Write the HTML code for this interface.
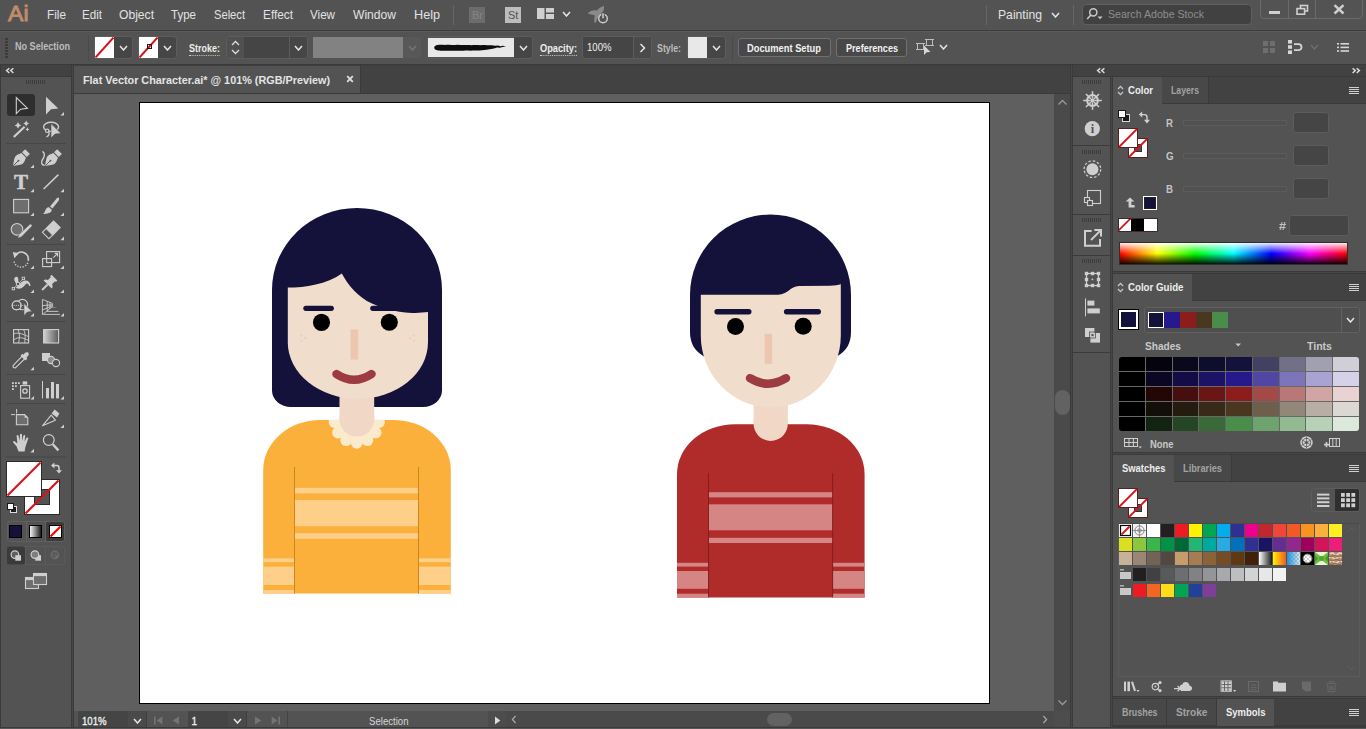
<!DOCTYPE html>
<html lang="en"><head><meta charset="utf-8"><title>Adobe Illustrator - Flat Vector Character.ai</title>
<style>
*{box-sizing:border-box;margin:0;padding:0}
html,body{width:1366px;height:729px;overflow:hidden;background:#535353;font-family:"Liberation Sans",sans-serif}
body{position:relative}
.a{position:absolute;display:block}
.t{position:absolute;display:block;white-space:pre;transform-origin:0 50%}

</style></head>
<body>
<div class="a" style="left:74px;top:65px;width:996px;height:28px;background:#424242;"></div>
<div class="a" style="left:74px;top:65px;width:286px;height:28px;background:#535353;"></div>
<div class="a" style="left:74px;top:65px;width:996px;height:1px;background:#3f3f3f;"></div>
<div class="a" style="left:360px;top:65px;width:1px;height:28px;background:#3a3a3a;"></div>
<div class="a" style="left:74px;top:93px;width:996px;height:1px;background:#3a3a3a;"></div>
<span class="t" style="left:83px;top:74.69px;font-size:11px;line-height:11px;color:#e4e4e4;font-weight:700;transform:scaleX(0.9841);">Flat Vector Character.ai* @ 101% (RGB/Preview)</span>
<svg class="a" style="left:346px;top:75px;" width="8" height="8" viewBox="0 0 8 8"><path d="M1.2 1.2 L6.8 6.8 M6.8 1.2 L1.2 6.8" stroke="#e0e0e0" stroke-width="1.8"/></svg>
<div class="a" style="left:74px;top:94px;width:980px;height:617px;background:#5f5f5f;"></div>
<div class="a" style="left:139px;top:102px;width:851px;height:602px;background:#fff;border:1px solid #000;"></div>
<svg class="a" style="left:0;top:0" width="1366" height="729" viewBox="0 0 1366 729"><path d="M272 290 A85 82 0 0 1 442 290 L442 390.5 A19 16.5 0 0 1 423 407 L291 407 A19 16.5 0 0 1 272 390.5 Z" fill="#14113a"/><path d="M339.5 390 L374.2 390 L374.2 419.2 A17.35 17.35 0 0 1 339.5 419.2 Z" fill="#f0d7c6"/><path d="M287.8 270 L428 270 L428 342.3 A70.1 56.4 0 0 1 287.8 342.3 Z" fill="#f1ddcc"/><rect x="303.3" y="305.7" width="30.6" height="5.2" rx="2.6" fill="#14113a"/><rect x="370.2" y="305.7" width="30.6" height="5.2" rx="2.6" fill="#14113a"/><path d="M286 262 L430 262 L430 312 L428.3 312 C424 312.4 420 312.8 415 313 C403 313.5 385 309.5 372 303.6 C358 297 348 285 341.8 273.4 C327 284 305 287.6 287.8 287.6 L286 287.6 Z" fill="#14113a"/><circle cx="321.5" cy="322.4" r="8.55" fill="#000"/><circle cx="389.3" cy="322.3" r="8.55" fill="#000"/><rect x="350.6" y="329.4" width="7.6" height="30.1" fill="#ecc6ae"/><path d="M336.4 374 Q354 385.6 371.6 374" fill="none" stroke="#9c3b40" stroke-width="8.4" stroke-linecap="round"/><circle cx="301.4" cy="335.6" r="1.25" fill="#f3cdbd"/><circle cx="305.1" cy="338.1" r="1.25" fill="#f3cdbd"/><circle cx="301.4" cy="340.8" r="1.25" fill="#f3cdbd"/><circle cx="413.9" cy="335.6" r="1.25" fill="#f3cdbd"/><circle cx="410.1" cy="338.1" r="1.25" fill="#f3cdbd"/><circle cx="413.9" cy="340.8" r="1.25" fill="#f3cdbd"/><path d="M263.2 593.6 L263.2 470 A57 50 0 0 1 320.2 420 L393.8 420 A57 50 0 0 1 450.8 470 L450.8 593.6 Z" fill="#fbb03b"/><rect x="294.8" y="487.8" width="123.4" height="5.6" fill="#fdcf89"/><rect x="294.8" y="500" width="123.4" height="26.2" fill="#fdcf89"/><rect x="294.8" y="533.2" width="123.4" height="5.6" fill="#fdcf89"/><rect x="263.2" y="558.3" width="31" height="3.9" fill="#fdcf89"/><rect x="418.8" y="558.3" width="32" height="3.9" fill="#fdcf89"/><rect x="263.2" y="566.6" width="31" height="18.4" fill="#fdcf89"/><rect x="418.8" y="566.6" width="32" height="18.4" fill="#fdcf89"/><rect x="263.2" y="590" width="31" height="3.6" fill="#fdcf89"/><rect x="418.8" y="590" width="32" height="3.6" fill="#fdcf89"/><rect x="294" y="467" width="0.8" height="126.6" fill="#c17c18"/><rect x="418.1" y="467" width="0.8" height="126.6" fill="#c17c18"/><clipPath id="ccl"><rect x="320" y="419.8" width="80" height="40"/></clipPath><g clip-path="url(#ccl)"><circle cx="356.8" cy="420.6" r="23.5" fill="#fceacd"/><circle cx="379.1" cy="422.2" r="5.8" fill="#fceacd"/><circle cx="375.7" cy="432.7" r="5.8" fill="#fceacd"/><circle cx="367.5" cy="440.3" r="5.8" fill="#fceacd"/><circle cx="356.8" cy="443.0" r="5.8" fill="#fceacd"/><circle cx="346.1" cy="440.3" r="5.8" fill="#fceacd"/><circle cx="337.9" cy="432.7" r="5.8" fill="#fceacd"/><circle cx="334.5" cy="422.2" r="5.8" fill="#fceacd"/></g><path d="M339.5 415 L374.2 415 L374.2 419.2 A17.35 17.35 0 0 1 339.5 419.2 Z" fill="#f0d7c6"/><path d="M690 295 A80.5 80.5 0 0 1 851 295 L851 332 C851 344 846 351 837 356.5 L704 356.5 C695 351 690 344 690 332 Z" fill="#14113a"/><path d="M753.6 395 L787.8 395 L787.8 423.8 A17.1 17.1 0 0 1 753.6 423.8 Z" fill="#f0d7c6"/><path d="M700.8 280 L840.8 280 L840.8 335.4 A70 72 0 0 1 700.8 335.4 Z" fill="#f1ddcc"/><path d="M698 265 L843 265 L840.8 284.3 Q837 285.6 830 285.8 L799 286 C790 286.2 788 294.7 778 294.7 L700.8 294.7 L698 294.7 Z" fill="#14113a"/><rect x="714.4" y="308.9" width="37.1" height="5.5" rx="2.7" fill="#14113a"/><rect x="783.9" y="308.9" width="37.1" height="5.5" rx="2.7" fill="#14113a"/><circle cx="735.5" cy="326.5" r="8.5" fill="#000"/><circle cx="803.2" cy="326.3" r="8.5" fill="#000"/><rect x="764.7" y="333.7" width="7.4" height="30.1" fill="#ecc6ae"/><path d="M750 378.2 Q768 389.2 786 378.2" fill="none" stroke="#9c3b40" stroke-width="8.4" stroke-linecap="round"/><path d="M677 597.4 L677 474.2 A58 50 0 0 1 735 424.2 L806.6 424.2 A58 50 0 0 1 864.6 474.2 L864.6 597.4 Z" fill="#b02c2b"/><rect x="708.8" y="492.2" width="123.6" height="5.2" fill="#d58584"/><rect x="708.8" y="504.3" width="123.6" height="26.0" fill="#d58584"/><rect x="708.8" y="537.8" width="123.6" height="5.2" fill="#d58584"/><rect x="677" y="562.8" width="31.2" height="3.8" fill="#d58584"/><rect x="833" y="562.8" width="31.6" height="3.8" fill="#d58584"/><rect x="677" y="571" width="31.2" height="17.8" fill="#d58584"/><rect x="833" y="571" width="31.6" height="17.8" fill="#d58584"/><rect x="677" y="593.7" width="31.2" height="3.7" fill="#d58584"/><rect x="833" y="593.7" width="31.6" height="3.7" fill="#d58584"/><rect x="708" y="473.2" width="0.8" height="124.2" fill="#7a1a1a"/><rect x="832.3" y="473.2" width="0.8" height="124.2" fill="#7a1a1a"/><path d="M753.6 420 L787.8 420 L787.8 423.8 A17.1 17.1 0 0 1 753.6 423.8 Z" fill="#f0d7c6"/></svg>
<div class="a" style="left:1054px;top:94px;width:16px;height:617px;background:#4a4a4a;"></div>
<svg class="a" style="left:1057px;top:99px;" width="11" height="7" viewBox="0 0 11 7"><path d="M1.5 5.5 L5.5 1.5 L9.5 5.5" fill="none" stroke="#9a9a9a" stroke-width="1.3"/></svg>
<svg class="a" style="left:1057px;top:699px;" width="11" height="7" viewBox="0 0 11 7"><path d="M1.5 1.5 L5.5 5.5 L9.5 1.5" fill="none" stroke="#9a9a9a" stroke-width="1.3"/></svg>
<div class="a" style="left:1055px;top:390px;width:15px;height:25px;background:#626262;border-radius:7.5px;"></div>
<div class="a" style="left:1070px;top:65px;width:3px;height:664px;background:#3a3a3a;"></div>
<div class="a" style="left:1071px;top:65px;width:1px;height:664px;background:#474747;"></div>
<div class="a" style="left:0px;top:0px;width:1366px;height:30px;background:#535353;"></div>
<div class="a" style="left:0px;top:30px;width:1366px;height:1px;background:#3d3d3d;"></div>
<span class="t" style="left:8px;top:2.98px;font-size:22px;line-height:22px;color:#c08c6c;transform:scaleX(1.0479);-webkit-text-stroke:0.9px #c08c6c;">Ai</span>
<span class="t" style="left:47px;top:8.00px;font-size:13px;line-height:13px;color:#e2e2e2;transform:scaleX(0.9068);">File</span>
<span class="t" style="left:82px;top:8.00px;font-size:13px;line-height:13px;color:#e2e2e2;transform:scaleX(0.8926);">Edit</span>
<span class="t" style="left:119px;top:8.00px;font-size:13px;line-height:13px;color:#e2e2e2;transform:scaleX(0.9314);">Object</span>
<span class="t" style="left:171px;top:8.00px;font-size:13px;line-height:13px;color:#e2e2e2;transform:scaleX(0.8869);">Type</span>
<span class="t" style="left:214px;top:8.00px;font-size:13px;line-height:13px;color:#e2e2e2;transform:scaleX(0.8578);">Select</span>
<span class="t" style="left:263px;top:8.00px;font-size:13px;line-height:13px;color:#e2e2e2;transform:scaleX(0.9087);">Effect</span>
<span class="t" style="left:310px;top:8.00px;font-size:13px;line-height:13px;color:#e2e2e2;transform:scaleX(0.8944);">View</span>
<span class="t" style="left:353px;top:8.00px;font-size:13px;line-height:13px;color:#e2e2e2;transform:scaleX(0.9297);">Window</span>
<span class="t" style="left:414px;top:8.00px;font-size:13px;line-height:13px;color:#e2e2e2;transform:scaleX(0.9720);">Help</span>
<div class="a" style="left:453px;top:5px;width:1px;height:20px;background:#666;"></div>
<div class="a" style="left:469px;top:7px;width:16px;height:16px;background:#6c6c6c;"></div>
<span class="t" style="left:471.5px;top:10.11px;font-size:10.5px;line-height:10.5px;color:#858585;transform:scaleX(1.0476);">Br</span>
<div class="a" style="left:505px;top:7px;width:16px;height:16px;background:#bdbdbd;"></div>
<span class="t" style="left:508px;top:9.99px;font-size:11px;line-height:11px;color:#535353;">St</span>
<svg class="a" style="left:537px;top:8px;" width="17" height="11" viewBox="0 0 17 11"><rect x="0" y="0" width="7.5" height="11" fill="#cfcfcf"/><rect x="9" y="0" width="8" height="4.5" fill="#cfcfcf"/><rect x="9" y="6" width="8" height="5" fill="#cfcfcf"/></svg>
<svg class="a" style="left:562.0px;top:10.5px;" width="9" height="6" viewBox="0 0 9 6"><path d="M1 1 L4.5 5 L8 1" fill="none" stroke="#e6e6e6" stroke-width="1.5"/></svg>
<svg class="a" style="left:586px;top:5px;" width="24" height="20" viewBox="0 0 24 20"><path d="M1.5 8.5 C4 5.5 8 4.5 11 5.5 C13 3 15.5 1.5 18 1 C18.3 3.5 17.6 6 16 8.5 L12.5 12 C11.5 13 10.5 15.5 10 17.5 L8.3 17.5 C8.3 15 8.2 12.5 9 10.5 C6.5 9.5 4 9.3 1.5 8.5 Z" fill="#8a8a8a"/><circle cx="17" cy="13.5" r="4.3" fill="#535353" stroke="#cfcfcf" stroke-width="1.4"/><rect x="15.3" y="7.6" width="3.4" height="4" fill="#535353"/><line x1="17" y1="8.3" x2="17" y2="13.2" stroke="#cfcfcf" stroke-width="1.5"/></svg>
<div class="a" style="left:986px;top:5px;width:1px;height:20px;background:#666;"></div>
<span class="t" style="left:998px;top:8.00px;font-size:13px;line-height:13px;color:#e2e2e2;transform:scaleX(0.9365);">Painting</span>
<svg class="a" style="left:1051.0px;top:12.0px;" width="9" height="6" viewBox="0 0 9 6"><path d="M1 1 L4.5 5 L8 1" fill="none" stroke="#e6e6e6" stroke-width="1.5"/></svg>
<div class="a" style="left:1073px;top:5px;width:1px;height:20px;background:#666;"></div>
<div class="a" style="left:1082px;top:4px;width:170px;height:21px;background:#414141;border:1px solid #5f5f5f;border-radius:4px;"></div>
<svg class="a" style="left:1086px;top:7px;" width="18" height="14" viewBox="0 0 18 14"><circle cx="7.3" cy="5.3" r="3.6" fill="none" stroke="#c8c8c8" stroke-width="1.5"/><line x1="4.8" y1="8" x2="1.2" y2="12" stroke="#c8c8c8" stroke-width="1.6"/><path d="M11.6 9.5 L16.6 9.5 L14.1 12.2 Z" fill="#c8c8c8"/></svg>
<span class="t" style="left:1108px;top:9.27px;font-size:11.5px;line-height:11.5px;color:#8e8e8e;transform:scaleX(0.9211);">Search Adobe Stock</span>
<div class="a" style="left:1260px;top:-2px;width:103px;height:21px;border:1px solid #6a6a6a;border-radius:0 0 4px 4px;"></div>
<div class="a" style="left:1288px;top:0px;width:1px;height:18px;background:#6a6a6a;"></div>
<div class="a" style="left:1315px;top:0px;width:1px;height:18px;background:#6a6a6a;"></div>
<div class="a" style="left:1269px;top:11px;width:11px;height:3px;background:#cfcfcf;"></div>
<svg class="a" style="left:1296px;top:4px;" width="14" height="12" viewBox="0 0 14 12"><rect x="4.5" y="1.5" width="7" height="5.5" fill="none" stroke="#cfcfcf" stroke-width="1.6"/><rect x="1" y="4.6" width="7.6" height="5.6" fill="#535353" stroke="#cfcfcf" stroke-width="1.6"/></svg>
<svg class="a" style="left:1333px;top:4px;" width="12" height="11" viewBox="0 0 12 11"><path d="M1.5 1.2 L10.5 9.5 M10.5 1.2 L1.5 9.5" stroke="#cfcfcf" stroke-width="2.4" fill="none"/></svg>
<div class="a" style="left:0px;top:31px;width:1366px;height:33px;background:#535353;"></div>
<div class="a" style="left:0px;top:31px;width:1366px;height:1px;background:#5a5a5a;"></div>
<div class="a" style="left:5px;top:38px;width:3px;height:1.5px;background:#3a3a3a;"></div>
<div class="a" style="left:5px;top:41px;width:3px;height:1.5px;background:#3a3a3a;"></div>
<div class="a" style="left:5px;top:44px;width:3px;height:1.5px;background:#3a3a3a;"></div>
<div class="a" style="left:5px;top:47px;width:3px;height:1.5px;background:#3a3a3a;"></div>
<div class="a" style="left:5px;top:50px;width:3px;height:1.5px;background:#3a3a3a;"></div>
<div class="a" style="left:5px;top:53px;width:3px;height:1.5px;background:#3a3a3a;"></div>
<div class="a" style="left:5px;top:56px;width:3px;height:1.5px;background:#3a3a3a;"></div>
<span class="t" style="left:15px;top:42.14px;font-size:10px;line-height:10px;color:#bcbcbc;font-weight:700;transform:scaleX(0.9079);">No Selection</span>
<div class="a" style="left:88px;top:36px;width:1px;height:25px;background:#4a4a4a;"></div>
<div class="a" style="left:94px;top:36px;width:39px;height:23px;border:1px solid #5c5c5c;border-radius:3px;"></div>
<svg class="a" style="left:95px;top:37px;" width="19" height="21" viewBox="0 0 19 21"><rect x="0" y="0" width="19" height="21" fill="#fff"/><line x1="0.5" y1="20.5" x2="18.5" y2="0.5" stroke="#d4151b" stroke-width="2"/></svg>
<div class="a" style="left:114px;top:37px;width:18px;height:21px;background:#464646;border-radius:0 3px 3px 0;"></div>
<svg class="a" style="left:118.5px;top:44.5px;" width="9" height="6" viewBox="0 0 9 6"><path d="M1 1 L4.5 5 L8 1" fill="none" stroke="#e6e6e6" stroke-width="1.5"/></svg>
<div class="a" style="left:138px;top:36px;width:39px;height:23px;border:1px solid #5c5c5c;border-radius:3px;"></div>
<svg class="a" style="left:139px;top:37px;" width="19" height="21" viewBox="0 0 19 21"><rect x="0" y="0" width="19" height="21" fill="#fff"/><line x1="0.5" y1="20.5" x2="18.5" y2="0.5" stroke="#d4151b" stroke-width="2"/></svg>
<svg class="a" style="left:147px;top:44px;" width="5" height="5" viewBox="0 0 5 5"><rect x="0.5" y="0.5" width="4" height="4" fill="none" stroke="#1a1a1a" stroke-width="1"/></svg>
<div class="a" style="left:158px;top:37px;width:18px;height:21px;background:#464646;border-radius:0 3px 3px 0;"></div>
<svg class="a" style="left:162.5px;top:44.5px;" width="9" height="6" viewBox="0 0 9 6"><path d="M1 1 L4.5 5 L8 1" fill="none" stroke="#e6e6e6" stroke-width="1.5"/></svg>
<span class="t" style="left:189px;top:43.53px;font-size:10px;line-height:10px;color:#ececec;font-weight:700;transform:scaleX(0.8998);border-bottom:1px dotted #ccc;padding-bottom:1px;">Stroke:</span>
<div class="a" style="left:226px;top:36px;width:82px;height:23px;border:1px solid #5c5c5c;border-radius:3px;"></div>
<div class="a" style="left:227px;top:37px;width:17px;height:21px;background:#505050;"></div>
<svg class="a" style="left:231px;top:39px;" width="9" height="17" viewBox="0 0 9 17"><path d="M1 6 L4.5 2.5 L8 6" fill="none" stroke="#ddd" stroke-width="1.3"/><path d="M1 11 L4.5 14.5 L8 11" fill="none" stroke="#ddd" stroke-width="1.3"/></svg>
<div class="a" style="left:244px;top:37px;width:45px;height:21px;background:#454545;"></div>
<div class="a" style="left:289px;top:37px;width:1px;height:21px;background:#5c5c5c;"></div>
<div class="a" style="left:290px;top:37px;width:17px;height:21px;background:#464646;border-radius:0 3px 3px 0;"></div>
<svg class="a" style="left:294.0px;top:44.5px;" width="9" height="6" viewBox="0 0 9 6"><path d="M1 1 L4.5 5 L8 1" fill="none" stroke="#e6e6e6" stroke-width="1.5"/></svg>
<div class="a" style="left:313px;top:37px;width:90px;height:21px;background:#828282;"></div>
<div class="a" style="left:403px;top:37px;width:18px;height:21px;background:#585858;border-radius:0 3px 3px 0;"></div>
<svg class="a" style="left:407.5px;top:44.5px;" width="9" height="6" viewBox="0 0 9 6"><path d="M1 1 L4.5 5 L8 1" fill="none" stroke="#767676" stroke-width="1.5"/></svg>
<div class="a" style="left:427px;top:36px;width:106px;height:23px;border:1px solid #5c5c5c;border-radius:3px;"></div>
<div class="a" style="left:428px;top:38px;width:86px;height:19px;background:#e8e8e8;"></div>
<svg class="a" style="left:428px;top:37px;" width="86" height="21" viewBox="0 0 86 21"><path d="M6.2 10.6 C6.4 8.6 8.6 8 11 7.8 C14 7.4 16 8.2 19 7.8 C22 7.4 25 8.2 28 7.9 C31 7.6 34 8.4 37 8 C40 7.7 43 8.4 46 8 C49 7.8 52 8.4 55 8 C58 7.8 61 8.4 64 8.2 L67 8.8 L70 8.4 L72.5 9.2 L75 8.8 L78 9.6 L74.5 10 L72 10.8 L69 10.6 C67 11.4 65 11.8 63 12 C60 12.6 57 12.8 54 13.2 C51 13.6 48 13.2 45 13.6 C42 13.9 39 13.4 36 13.7 C33 14 30 13.5 27 13.7 C24 14 21 13.5 18 13.7 C15 13.9 12 13.6 10 13.4 C7.6 13.2 6.2 12.4 6.2 10.6 Z" fill="#0d0d0d"/></svg>
<div class="a" style="left:514px;top:37px;width:18px;height:21px;background:#464646;border-radius:0 3px 3px 0;"></div>
<svg class="a" style="left:518.5px;top:44.5px;" width="9" height="6" viewBox="0 0 9 6"><path d="M1 1 L4.5 5 L8 1" fill="none" stroke="#e6e6e6" stroke-width="1.5"/></svg>
<span class="t" style="left:540px;top:43.53px;font-size:10px;line-height:10px;color:#ececec;font-weight:700;transform:scaleX(0.9246);border-bottom:1px dotted #ccc;padding-bottom:1px;">Opacity:</span>
<div class="a" style="left:582px;top:36px;width:70px;height:23px;border:1px solid #5c5c5c;border-radius:3px;"></div>
<div class="a" style="left:583px;top:37px;width:50px;height:21px;background:#454545;border-radius:2px 0 0 2px;"></div>
<span class="t" style="left:587px;top:43.33px;font-size:10px;line-height:10px;color:#f0f0f0;transform:scaleX(0.9578);">100%</span>
<div class="a" style="left:633px;top:37px;width:1px;height:21px;background:#5c5c5c;"></div>
<div class="a" style="left:634px;top:37px;width:17px;height:21px;background:#4a4a4a;"></div>
<svg class="a" style="left:639px;top:43px;" width="7" height="10" viewBox="0 0 7 10"><path d="M1.5 1 L5.5 5 L1.5 9" fill="none" stroke="#e6e6e6" stroke-width="1.5"/></svg>
<span class="t" style="left:657px;top:43.53px;font-size:10px;line-height:10px;color:#bdbdbd;font-weight:700;transform:scaleX(0.8812);">Style:</span>
<div class="a" style="left:687px;top:36px;width:39px;height:23px;border:1px solid #5c5c5c;border-radius:3px;"></div>
<div class="a" style="left:688px;top:37px;width:19px;height:21px;background:#e8e8e8;"></div>
<div class="a" style="left:707px;top:37px;width:18px;height:21px;background:#464646;border-radius:0 3px 3px 0;"></div>
<svg class="a" style="left:711.5px;top:44.5px;" width="9" height="6" viewBox="0 0 9 6"><path d="M1 1 L4.5 5 L8 1" fill="none" stroke="#e6e6e6" stroke-width="1.5"/></svg>
<div class="a" style="left:732px;top:36px;width:1px;height:25px;background:#4a4a4a;"></div>
<div class="a" style="left:738px;top:38px;width:93px;height:19px;background:#484848;border:1px solid #707070;border-radius:3px;"></div>
<span class="t" style="left:747px;top:43.53px;font-size:10px;line-height:10px;color:#f2f2f2;font-weight:700;transform:scaleX(0.9314);">Document Setup</span>
<div class="a" style="left:836px;top:38px;width:71px;height:19px;background:#484848;border:1px solid #707070;border-radius:3px;"></div>
<span class="t" style="left:845.5px;top:43.53px;font-size:10px;line-height:10px;color:#f2f2f2;font-weight:700;transform:scaleX(0.9080);">Preferences</span>
<svg class="a" style="left:916px;top:38px;" width="18" height="18" viewBox="0 0 18 18"><rect x="1.5" y="5.5" width="6" height="6" fill="none" stroke="#bdbdbd" stroke-width="1"/><rect x="10.5" y="1.5" width="6" height="6" fill="none" stroke="#bdbdbd" stroke-width="1"/><path d="M0 5.5h2M7 5.5h2M0 11.5h2M7 11.5h2M9 1.5h2M16 1.5h2M9 7.5h2M16 7.5h2" stroke="#bdbdbd"/><path d="M8 7.5 L8 17 L10.7 14.3 L14.5 14 Z" fill="#d6d6d6"/></svg>
<svg class="a" style="left:939.0px;top:44.0px;" width="9" height="6" viewBox="0 0 9 6"><path d="M1 1 L4.5 5 L8 1" fill="none" stroke="#e6e6e6" stroke-width="1.5"/></svg>
<svg class="a" style="left:1263px;top:41px;" width="12" height="12" viewBox="0 0 12 12"><g fill="#6e6e6e"><rect x="0" y="0" width="5" height="5"/><rect x="7" y="0" width="5" height="5"/><rect x="0" y="7" width="5" height="5"/><rect x="7" y="7" width="5" height="5"/></g></svg>
<svg class="a" style="left:1288px;top:40px;" width="15" height="14" viewBox="0 0 15 14"><g fill="#d6d6d6"><rect x="0" y="0" width="4" height="3.6"/><rect x="0" y="5.2" width="4" height="3.6"/><rect x="0" y="10.4" width="4" height="3.6"/></g><path d="M6 4.2 H10.5 A3 3 0 0 1 10.5 10.2 H6" fill="none" stroke="#d6d6d6" stroke-width="1.8"/></svg>
<svg class="a" style="left:1309.5px;top:43.5px;" width="9" height="6" viewBox="0 0 9 6"><path d="M1 1 L4.5 5 L8 1" fill="none" stroke="#6e6e6e" stroke-width="1.5"/></svg>
<svg class="a" style="left:1337px;top:43px;" width="12" height="9" viewBox="0 0 12 9"><g fill="#d6d6d6"><rect x="0" y="0" width="2" height="1.6"/><rect x="3.5" y="0" width="8.5" height="1.6"/><rect x="0" y="3.6" width="2" height="1.6"/><rect x="3.5" y="3.6" width="8.5" height="1.6"/><rect x="0" y="7.2" width="2" height="1.6"/><rect x="3.5" y="7.2" width="8.5" height="1.6"/></g></svg>
<div class="a" style="left:0px;top:64px;width:1366px;height:1px;background:#3a3a3a;"></div>
<div class="a" style="left:0px;top:65px;width:74px;height:664px;background:#535353;"></div>
<div class="a" style="left:0px;top:65px;width:1px;height:664px;background:#3a3a3a;"></div>
<div class="a" style="left:71px;top:65px;width:3px;height:664px;background:#3a3a3a;"></div>
<div class="a" style="left:72px;top:65px;width:1px;height:664px;background:#474747;"></div>
<div class="a" style="left:1px;top:65px;width:70px;height:12px;background:#424242;"></div>
<div class="a" style="left:1px;top:76px;width:70px;height:1px;background:#3a3a3a;"></div>
<svg class="a" style="left:5px;top:67px;" width="10" height="8" viewBox="0 0 10 8"><path d="M4.3 1.2 L1.6 3.6 L4.3 6 M8.4 1.2 L5.7 3.6 L8.4 6" fill="none" stroke="#dcdcdc" stroke-width="1.5"/></svg>
<svg class="a" style="left:26px;top:80px;" width="20" height="4" viewBox="0 0 20 4"><rect x="0" y="0" width="1" height="4" fill="#3c3c3c"/><rect x="2" y="0" width="1" height="4" fill="#3c3c3c"/><rect x="4" y="0" width="1" height="4" fill="#3c3c3c"/><rect x="6" y="0" width="1" height="4" fill="#3c3c3c"/><rect x="8" y="0" width="1" height="4" fill="#3c3c3c"/><rect x="10" y="0" width="1" height="4" fill="#3c3c3c"/><rect x="12" y="0" width="1" height="4" fill="#3c3c3c"/><rect x="14" y="0" width="1" height="4" fill="#3c3c3c"/><rect x="16" y="0" width="1" height="4" fill="#3c3c3c"/><rect x="18" y="0" width="1" height="4" fill="#3c3c3c"/></svg>
<svg class="a" style="left:0;top:0" width="74" height="460" viewBox="0 0 74 460"><rect x="7" y="94" width="28" height="22" rx="3" fill="#2e2e2e"/><path d="M16.3 97.6 L16.3 113.6 L20.6 109.2 L27.4 108.4 Z" fill="none" stroke="#cfcfcf" stroke-width="1.1" stroke-linejoin="miter"/><path d="M46 96.8 L46 114.4 L51 109.3 L58.3 108.5 Z" fill="#cfcfcf"/><path d="M64 112.0 L64 115.6 L60.4 115.6 Z" fill="#cfcfcf"/><line x1="13.8" y1="137" x2="24.6" y2="126.8" stroke="#cfcfcf" stroke-width="2.2"/><path d="M18 122.0 L19.156 124.244 L21.4 125.4 L19.156 126.55600000000001 L18 128.8 L16.844 126.55600000000001 L14.6 125.4 L16.844 124.244 Z" fill="#cfcfcf"/><path d="M26.2 120.6 L27.186 122.514 L29.099999999999998 123.5 L27.186 124.486 L26.2 126.4 L25.214 124.486 L23.3 123.5 L25.214 122.514 Z" fill="#cfcfcf"/><path d="M27.4 127.30000000000001 L28.113999999999997 128.686 L29.5 129.4 L28.113999999999997 130.114 L27.4 131.5 L26.686 130.114 L25.299999999999997 129.4 L26.686 128.686 Z" fill="#cfcfcf"/><ellipse cx="51.1" cy="126.8" rx="7.5" ry="4.6" fill="none" stroke="#cfcfcf" stroke-width="1.4"/><circle cx="47.2" cy="130.8" r="1.7" fill="#535353" stroke="#cfcfcf" stroke-width="1.2"/><path d="M48.8 131.4 C49.6 134 48.6 136 46.4 136.8" fill="none" stroke="#cfcfcf" stroke-width="1.3"/><path d="M51 123.6 L51 138 L55 134 L61 133.4 Z" fill="#cfcfcf" stroke="#535353" stroke-width="0.6"/><rect x="6" y="143" width="60" height="1" fill="#474747"/><rect x="6" y="244" width="60" height="1" fill="#474747"/><rect x="6" y="321" width="60" height="1" fill="#474747"/><rect x="6" y="374" width="60" height="1" fill="#474747"/><rect x="6" y="403" width="60" height="1" fill="#474747"/><rect x="6" y="456.5" width="60" height="1" fill="#474747"/><g transform="translate(19.9 159.2) rotate(45) scale(1.0)"><rect x="-3.3" y="-10.8" width="6.6" height="4.4" fill="#cfcfcf"/><path d="M-3.3 -5.4 L3.3 -5.4 C4 -3 5.2 -1.6 5.2 0.6 C5.2 3.4 2 6.4 0 10 C-2 6.4 -5.2 3.4 -5.2 0.6 C-5.2 -1.6 -4 -3 -3.3 -5.4 Z" fill="#cfcfcf"/><line x1="0" y1="9.6" x2="0" y2="2.6" stroke="#535353" stroke-width="0.9"/><circle cx="0" cy="2" r="0.9" fill="#535353"/></g><path d="M34 164.4 L34 168 L30.4 168 Z" fill="#cfcfcf"/><g transform="translate(51.9 159.2) rotate(45) scale(1.0)"><rect x="-3.3" y="-10.8" width="6.6" height="4.4" fill="#cfcfcf"/><path d="M-3.3 -5.4 L3.3 -5.4 C4 -3 5.2 -1.6 5.2 0.6 C5.2 3.4 2 6.4 0 10 C-2 6.4 -5.2 3.4 -5.2 0.6 C-5.2 -1.6 -4 -3 -3.3 -5.4 Z" fill="#cfcfcf"/><line x1="0" y1="9.6" x2="0" y2="2.6" stroke="#535353" stroke-width="0.9"/><circle cx="0" cy="2" r="0.9" fill="#535353"/></g><path d="M42.4 151.4 C45.4 153 44.6 156.5 42.6 159.5 C40.6 162.5 41.5 165 44.8 165.4" fill="none" stroke="#cfcfcf" stroke-width="1.4"/><text x="21" y="188.9" text-anchor="middle" font-family="Liberation Serif, serif" font-weight="700" font-size="21" fill="#cfcfcf" stroke="#cfcfcf" stroke-width="0.5">T</text><path d="M34 188.70000000000002 L34 192.3 L30.4 192.3 Z" fill="#cfcfcf"/><line x1="43.6" y1="189" x2="58.4" y2="174.6" stroke="#cfcfcf" stroke-width="1.5"/><path d="M64 188.70000000000002 L64 192.3 L60.4 192.3 Z" fill="#cfcfcf"/><rect x="13.6" y="199.4" width="15" height="13.4" fill="#6e6e6e" stroke="#cfcfcf" stroke-width="1.1"/><path d="M34 212.4 L34 216 L30.4 216 Z" fill="#cfcfcf"/><path d="M58.6 197.6 C59.6 198.4 59.2 200 58 201.6 L52.4 208.6 L50 206.6 L55.8 199.4 C57 198 58 197.2 58.6 197.6 Z" fill="#cfcfcf"/><path d="M49.2 207.4 L51.6 209.6 C52 212 49.5 214.2 43 214 C45 212.6 45 210.6 46 209 C46.8 207.6 48.2 207.2 49.2 207.4 Z" fill="#cfcfcf"/><path d="M64 212.4 L64 216 L60.4 216 Z" fill="#cfcfcf"/><circle cx="17" cy="229.3" r="5.8" fill="#6e6e6e" stroke="#cfcfcf" stroke-width="1.1"/><path d="M30.4 223.8 L32.4 225.8 L21.4 237 L17.6 238.2 L18.8 234.6 Z" fill="#cfcfcf" stroke="#535353" stroke-width="0.6"/><path d="M34 236.6 L34 240.2 L30.4 240.2 Z" fill="#cfcfcf"/><g transform="translate(51.6 229.6) rotate(-45)"><rect x="-3" y="-5.2" width="11" height="10.4" fill="#cfcfcf"/><rect x="-8.4" y="-4.6" width="5.4" height="9.2" fill="none" stroke="#cfcfcf" stroke-width="1.1"/></g><path d="M64 236.6 L64 240.2 L60.4 240.2 Z" fill="#cfcfcf"/><path d="M15.6 255 A7 7 0 0 1 28.1 260.8" fill="none" stroke="#cfcfcf" stroke-width="1.7"/><path d="M12.8 252 L18.8 253.2 L14.4 258.2 Z" fill="#cfcfcf"/><path d="M14.1 261.6 A7.2 7.2 0 0 0 27.8 262.6" fill="none" stroke="#cfcfcf" stroke-width="1.5" stroke-dasharray="1.3 1.45"/><path d="M34 265.4 L34 269 L30.4 269 Z" fill="#cfcfcf"/><rect x="46.6" y="251.6" width="13" height="11" fill="none" stroke="#cfcfcf" stroke-width="1.1"/><rect x="42.6" y="258.6" width="9" height="8" fill="none" stroke="#cfcfcf" stroke-width="1.1"/><path d="M53.4 257.6 L57.4 253.6 M54.6 253.4 H57.6 V256.4" fill="none" stroke="#cfcfcf" stroke-width="1.1"/><path d="M64 265.4 L64 269 L60.4 269 Z" fill="#cfcfcf"/><path d="M14.2 280 C14 277.5 16 276.2 17.4 277 C18.8 278 18 280 18.6 282 C19.4 284 22.6 280.4 26 280.6 C29 280.8 30.6 283.6 30.4 286 L29 286 C28.8 284.4 28 283.4 26.8 283.6 C25 284 24 288.2 20 288.6 C17.6 288.8 15.6 288 15 286.4 C16.6 285 16 283 15.2 282 Z" fill="#cfcfcf"/><line x1="13.4" y1="288.8" x2="23.6" y2="278.6" stroke="#535353" stroke-width="1.8"/><line x1="13.4" y1="288.8" x2="23.6" y2="278.6" stroke="#cfcfcf" stroke-width="0.8"/><rect x="12.2" y="287.4" width="2.4" height="2.4" fill="#535353" stroke="#cfcfcf" stroke-width="0.9"/><rect x="22.2" y="277.2" width="2.4" height="2.4" fill="#535353" stroke="#cfcfcf" stroke-width="0.9"/><circle cx="18" cy="284" r="1.7" fill="#535353" stroke="#cfcfcf" stroke-width="0.9"/><path d="M34 289.4 L34 293 L30.4 293 Z" fill="#cfcfcf"/><g transform="translate(47.9 284.2) rotate(45)"><path d="M-4.1 -9.2 H4.1 V-7.2 H2.9 V-3 C4.8 -2.2 5.7 -1.2 5.7 0.4 H-5.7 C-5.7 -1.2 -4.8 -2.2 -2.9 -3 V-7.2 H-4.1 Z" fill="#cfcfcf"/><rect x="-0.95" y="0.4" width="1.9" height="7.8" fill="#cfcfcf"/></g><path d="M64 289.4 L64 293 L60.4 293 Z" fill="#cfcfcf"/><circle cx="16.6" cy="305.4" r="4.4" fill="none" stroke="#cfcfcf" stroke-width="1.1"/><circle cx="22.4" cy="304.6" r="5.2" fill="none" stroke="#cfcfcf" stroke-width="1.1"/><circle cx="16.6" cy="305.4" r="3.8" fill="#535353"/><path d="M19.2 301.5 A4.4 4.4 0 0 1 19.2 309.2" fill="none" stroke="#8a8a8a" stroke-width="0.9"/><circle cx="16.6" cy="305.4" r="4.4" fill="none" stroke="#cfcfcf" stroke-width="1.1"/><path d="M13.6 305.4 h12" stroke="#cfcfcf" stroke-width="1" stroke-dasharray="1 1.2"/><path d="M24 303.4 L24 315.4 L27.4 312 L32 311.6 Z" fill="#cfcfcf" stroke="#535353" stroke-width="0.5"/><path d="M34 313.0 L34 316.6 L30.4 316.6 Z" fill="#cfcfcf"/><path d="M42.4 299.4 L52.4 303.4 L52.4 306.6 L42.4 314.6 Z M47.2 301.4 V310.8 M42.4 305.6 L52.4 304.8 M50 302.4 V308.6 M42.4 310 L52.4 305.8" fill="none" stroke="#cfcfcf" stroke-width="0.9"/><path d="M52.4 306.6 L57 308 H52 Z" fill="#8a8a8a"/><path d="M47 311.4 H58.4 M43.4 314.4 H60" stroke="#cfcfcf" stroke-width="0.9"/><path d="M64 313.0 L64 316.6 L60.4 316.6 Z" fill="#cfcfcf"/><rect x="13.6" y="329.6" width="15" height="13.4" fill="none" stroke="#cfcfcf" stroke-width="1.1"/><path d="M18 329.6 C20 334 19.6 338 18.6 343 M23.6 329.6 C26 334 25 339 24.6 343 M13.6 334 C18 331.6 23.6 334.6 28.6 336.6 M13.6 340 C18 336.6 22 337 28.6 340.6" fill="none" stroke="#cfcfcf" stroke-width="0.9"/><defs><linearGradient id="tg" x1="0" x2="1" y1="0" y2="0"><stop offset="0" stop-color="#d2d2d2"/><stop offset="1" stop-color="#5a5a5a"/></linearGradient></defs><rect x="43.6" y="329.6" width="15" height="13.4" fill="url(#tg)" stroke="#cfcfcf" stroke-width="1.1"/><path d="M13.4 367.6 L13 365.6 L22 356.4 L24.6 359 L15.4 368 Z" fill="#535353" stroke="#cfcfcf" stroke-width="1.1"/><path d="M20.6 355.6 L22.4 353.8 L23.6 354.8 C24.4 352.6 26.6 351.4 28.2 352.6 C29.6 354 28.6 356.2 26.4 357.4 L27.4 358.6 L25.6 360.4 Z" fill="#cfcfcf"/><path d="M34 366.7 L34 370.3 L30.4 370.3 Z" fill="#cfcfcf"/><rect x="42" y="353" width="8" height="8" fill="#cfcfcf"/><circle cx="51" cy="360" r="3.6" fill="#8c8c8c" stroke="#cfcfcf" stroke-width="1.1"/><circle cx="56" cy="363" r="3.6" fill="#535353" stroke="#cfcfcf" stroke-width="1.1"/><rect x="12" y="382.2" width="1.8" height="1.8" fill="#cfcfcf"/><rect x="15" y="382.2" width="1.8" height="1.8" fill="#cfcfcf"/><rect x="18" y="382.2" width="1.8" height="1.8" fill="#cfcfcf"/><rect x="12" y="385.2" width="1.8" height="1.8" fill="#cfcfcf"/><rect x="15" y="385.2" width="1.8" height="1.8" fill="#cfcfcf"/><rect x="12" y="388.2" width="1.8" height="1.8" fill="#cfcfcf"/><rect x="20.6" y="385.6" width="9" height="12.6" fill="none" stroke="#cfcfcf" stroke-width="1.1"/><rect x="22.6" y="381.4" width="4.6" height="3.2" fill="#cfcfcf"/><circle cx="25" cy="391" r="2.2" fill="none" stroke="#cfcfcf" stroke-width="1.3"/><path d="M34 396.0 L34 399.6 L30.4 399.6 Z" fill="#cfcfcf"/><rect x="42" y="381" width="1" height="17.4" fill="#cfcfcf"/><rect x="46" y="388" width="3" height="10.4" fill="#cfcfcf"/><rect x="51" y="382" width="3" height="16.4" fill="#cfcfcf"/><rect x="56" y="384" width="3" height="14.4" fill="#cfcfcf"/><path d="M64 396.0 L64 399.6 L60.4 399.6 Z" fill="#cfcfcf"/><path d="M16.6 409 V413.4 M11 414.6 H15" stroke="#cfcfcf" stroke-width="1"/><path d="M16.4 414.6 H24.6 L27.8 417.8 V424.8 H16.4 Z" fill="#6e6e6e" stroke="#cfcfcf" stroke-width="1.1"/><path d="M24.6 414.6 V417.8 H27.8 Z" fill="#cfcfcf"/><path d="M42.4 425.8 L51.2 415.2 L55.4 420.2 Z" fill="#535353" stroke="#cfcfcf" stroke-width="1.1" stroke-linejoin="round"/><path d="M51.6 413.4 L54.6 409.6 L59.4 413.6 L57 417.6 Z" fill="#cfcfcf"/><path d="M64 424.4 L64 428 L60.4 428 Z" fill="#cfcfcf"/><path d="M16.6 446.6 L13.2 442.6 C12.6 441.6 13.8 440.6 14.8 441.4 L17.4 443.6 L16.6 436 C16.6 434.8 18.4 434.8 18.6 436 L19.6 441 L20 434.6 C20.2 433.4 22 433.4 22 434.6 L22.2 441 L23.4 435.6 C23.8 434.4 25.4 434.8 25.2 436 L24.6 441.6 L26.4 438 C27 437 28.6 437.6 28.2 438.8 L25.4 447 L24.6 451.4 H18.6 Z" fill="#cfcfcf"/><path d="M34 448.79999999999995 L34 452.4 L30.4 452.4 Z" fill="#cfcfcf"/><circle cx="48.8" cy="440" r="5.4" fill="none" stroke="#cfcfcf" stroke-width="1.2"/><line x1="52.8" y1="444.2" x2="58.4" y2="450.4" stroke="#cfcfcf" stroke-width="2.4"/></svg>
<svg class="a" style="left:0;top:460px" width="74" height="140" viewBox="0 460 74 140"><rect x="24.5" y="479.5" width="35" height="35" fill="#fff" stroke="#2b2b2b" stroke-width="1"/><rect x="34.5" y="489.5" width="15" height="15" fill="#535353" stroke="#2b2b2b" stroke-width="1"/><line x1="25.5" y1="513.5" x2="58.5" y2="480.5" stroke="#d4151b" stroke-width="2.2"/><rect x="6.5" y="461.5" width="35" height="35" fill="#fff" stroke="#2b2b2b" stroke-width="1"/><line x1="7.5" y1="495.5" x2="40.5" y2="462.5" stroke="#d4151b" stroke-width="2.2"/><path d="M53.6 465.6 H57 C58.6 465.6 59 466.6 59 468 V471" fill="none" stroke="#cfcfcf" stroke-width="1.5"/><path d="M51 465.6 L54.4 462.6 V468.6 Z M59 473.6 L56 470.2 H62 Z" fill="#cfcfcf"/><rect x="10.5" y="506.5" width="6" height="6" fill="#1a1a1a" stroke="#ddd" stroke-width="1"/><rect x="7.5" y="503.5" width="6" height="6" fill="#fff" stroke="#1a1a1a" stroke-width="1"/><rect x="7.5" y="521.5" width="57" height="20" rx="2" fill="none" stroke="#606060" stroke-width="1"/><rect x="46" y="522" width="18" height="19" rx="2" fill="#3c3c3c"/><line x1="26.5" y1="522" x2="26.5" y2="541" stroke="#606060"/><line x1="45.5" y1="522" x2="45.5" y2="541" stroke="#606060"/><rect x="9.5" y="525.5" width="12" height="12" fill="#14113a" stroke="#000" stroke-width="1"/><defs><linearGradient id="cg" x1="0" x2="1"><stop offset="0" stop-color="#fff"/><stop offset="1" stop-color="#111"/></linearGradient></defs><rect x="29.5" y="525.5" width="12" height="12" fill="url(#cg)" stroke="#000" stroke-width="1"/><rect x="49.5" y="525.5" width="12" height="12" fill="#fff" stroke="#000" stroke-width="1"/><line x1="50.5" y1="536.5" x2="60.5" y2="526.5" stroke="#f00" stroke-width="2.2"/><rect x="7.5" y="546.5" width="57" height="18" rx="2" fill="none" stroke="#5a5a5a" stroke-width="1"/><rect x="7" y="546.5" width="18" height="18" rx="2" fill="#3a3a3a"/><line x1="25.5" y1="547" x2="25.5" y2="564" stroke="#5a5a5a"/><line x1="45.5" y1="547" x2="45.5" y2="564" stroke="#5a5a5a"/><circle cx="14.9" cy="554.6" r="3.8" fill="#5e5e5e" stroke="#cfcfcf" stroke-width="1.2"/><rect x="15.3" y="555.2" width="5.7" height="5.5" fill="#cfcfcf"/><rect x="35.3" y="555.2" width="5.7" height="5.5" fill="#cfcfcf"/><circle cx="34.9" cy="554.6" r="3.8" fill="#7e7e7e" stroke="#cfcfcf" stroke-width="1.2"/><circle cx="54.9" cy="555" r="3.8" fill="#5c5c5c" stroke="#6e6e6e" stroke-width="1.2"/><path d="M55.4 555.4 h3 a3.4 3.4 0 0 1 -3 3 Z" fill="#6e6e6e"/><rect x="25.5" y="577.5" width="13" height="11" fill="#6e6e6e" stroke="#cfcfcf" stroke-width="1.1"/><rect x="25.5" y="577.5" width="13" height="2.6" fill="#cfcfcf"/><rect x="33.5" y="573.5" width="13" height="11" fill="#6e6e6e" stroke="#cfcfcf" stroke-width="1.1"/><rect x="33.5" y="573.5" width="13" height="2.6" fill="#cfcfcf"/></svg>
<div class="a" style="left:1073px;top:65px;width:293px;height:664px;background:#535353;"></div>
<div class="a" style="left:1073px;top:65px;width:293px;height:12px;background:#424242;"></div>
<div class="a" style="left:1073px;top:76px;width:293px;height:1px;background:#3a3a3a;"></div>
<div class="a" style="left:1110px;top:77px;width:3px;height:652px;background:#3a3a3a;"></div>
<div class="a" style="left:1111px;top:77px;width:1px;height:652px;background:#474747;"></div>
<svg class="a" style="left:1096px;top:67px;" width="10" height="8" viewBox="0 0 10 8"><path d="M4.3 1.2 L1.6 3.6 L4.3 6 M8.4 1.2 L5.7 3.6 L8.4 6" fill="none" stroke="#dcdcdc" stroke-width="1.5"/></svg>
<svg class="a" style="left:1351px;top:67px;" width="10" height="8" viewBox="0 0 10 8"><path d="M1.6 1.2 L4.3 3.6 L1.6 6 M5.7 1.2 L8.4 3.6 L5.7 6" fill="none" stroke="#dcdcdc" stroke-width="1.5"/></svg>
<svg class="a" style="left:1082px;top:80px;" width="20" height="4" viewBox="0 0 20 4"><rect x="0" y="0" width="1" height="4" fill="#3c3c3c"/><rect x="2" y="0" width="1" height="4" fill="#3c3c3c"/><rect x="4" y="0" width="1" height="4" fill="#3c3c3c"/><rect x="6" y="0" width="1" height="4" fill="#3c3c3c"/><rect x="8" y="0" width="1" height="4" fill="#3c3c3c"/><rect x="10" y="0" width="1" height="4" fill="#3c3c3c"/><rect x="12" y="0" width="1" height="4" fill="#3c3c3c"/><rect x="14" y="0" width="1" height="4" fill="#3c3c3c"/><rect x="16" y="0" width="1" height="4" fill="#3c3c3c"/><rect x="18" y="0" width="1" height="4" fill="#3c3c3c"/></svg>
<svg class="a" style="left:1082px;top:149.5px;" width="20" height="4" viewBox="0 0 20 4"><rect x="0" y="0" width="1" height="4" fill="#3c3c3c"/><rect x="2" y="0" width="1" height="4" fill="#3c3c3c"/><rect x="4" y="0" width="1" height="4" fill="#3c3c3c"/><rect x="6" y="0" width="1" height="4" fill="#3c3c3c"/><rect x="8" y="0" width="1" height="4" fill="#3c3c3c"/><rect x="10" y="0" width="1" height="4" fill="#3c3c3c"/><rect x="12" y="0" width="1" height="4" fill="#3c3c3c"/><rect x="14" y="0" width="1" height="4" fill="#3c3c3c"/><rect x="16" y="0" width="1" height="4" fill="#3c3c3c"/><rect x="18" y="0" width="1" height="4" fill="#3c3c3c"/></svg>
<svg class="a" style="left:1082px;top:218px;" width="20" height="4" viewBox="0 0 20 4"><rect x="0" y="0" width="1" height="4" fill="#3c3c3c"/><rect x="2" y="0" width="1" height="4" fill="#3c3c3c"/><rect x="4" y="0" width="1" height="4" fill="#3c3c3c"/><rect x="6" y="0" width="1" height="4" fill="#3c3c3c"/><rect x="8" y="0" width="1" height="4" fill="#3c3c3c"/><rect x="10" y="0" width="1" height="4" fill="#3c3c3c"/><rect x="12" y="0" width="1" height="4" fill="#3c3c3c"/><rect x="14" y="0" width="1" height="4" fill="#3c3c3c"/><rect x="16" y="0" width="1" height="4" fill="#3c3c3c"/><rect x="18" y="0" width="1" height="4" fill="#3c3c3c"/></svg>
<svg class="a" style="left:1082px;top:259px;" width="20" height="4" viewBox="0 0 20 4"><rect x="0" y="0" width="1" height="4" fill="#3c3c3c"/><rect x="2" y="0" width="1" height="4" fill="#3c3c3c"/><rect x="4" y="0" width="1" height="4" fill="#3c3c3c"/><rect x="6" y="0" width="1" height="4" fill="#3c3c3c"/><rect x="8" y="0" width="1" height="4" fill="#3c3c3c"/><rect x="10" y="0" width="1" height="4" fill="#3c3c3c"/><rect x="12" y="0" width="1" height="4" fill="#3c3c3c"/><rect x="14" y="0" width="1" height="4" fill="#3c3c3c"/><rect x="16" y="0" width="1" height="4" fill="#3c3c3c"/><rect x="18" y="0" width="1" height="4" fill="#3c3c3c"/></svg>
<div class="a" style="left:1073px;top:145px;width:37px;height:1px;background:#3a3a3a;"></div>
<div class="a" style="left:1073px;top:214px;width:37px;height:1px;background:#3a3a3a;"></div>
<div class="a" style="left:1073px;top:255px;width:37px;height:1px;background:#3a3a3a;"></div>
<div class="a" style="left:1073px;top:352px;width:37px;height:1px;background:#3a3a3a;"></div>
<svg class="a" style="left:1073px;top:77px" width="37" height="280" viewBox="1073 77 37 280"><circle cx="1092.5" cy="100.5" r="5.4" fill="none" stroke="#cfcfcf" stroke-width="2"/><circle cx="1092.5" cy="100.5" r="1.9" fill="#cfcfcf"/><line x1="1094.50" y1="100.50" x2="1101.80" y2="100.50" stroke="#cfcfcf" stroke-width="1.5"/><line x1="1093.91" y1="101.91" x2="1099.08" y2="107.08" stroke="#cfcfcf" stroke-width="1.5"/><line x1="1092.50" y1="102.50" x2="1092.50" y2="109.80" stroke="#cfcfcf" stroke-width="1.5"/><line x1="1091.09" y1="101.91" x2="1085.92" y2="107.08" stroke="#cfcfcf" stroke-width="1.5"/><line x1="1090.50" y1="100.50" x2="1083.20" y2="100.50" stroke="#cfcfcf" stroke-width="1.5"/><line x1="1091.09" y1="99.09" x2="1085.92" y2="93.92" stroke="#cfcfcf" stroke-width="1.5"/><line x1="1092.50" y1="98.50" x2="1092.50" y2="91.20" stroke="#cfcfcf" stroke-width="1.5"/><line x1="1093.91" y1="99.09" x2="1099.08" y2="93.92" stroke="#cfcfcf" stroke-width="1.5"/><circle cx="1092.3" cy="128.7" r="7.6" fill="#cfcfcf"/><text x="1092.4" y="132.8" text-anchor="middle" font-family="Liberation Serif, serif" font-weight="700" font-size="12.5" fill="#535353">i</text><circle cx="1092.4" cy="169.2" r="6" fill="#cfcfcf"/><circle cx="1092.4" cy="169.2" r="8.3" fill="none" stroke="#cfcfcf" stroke-width="1.2" stroke-dasharray="2.6 1.75"/><rect x="1087.5" y="190.5" width="13" height="13" fill="none" stroke="#cfcfcf" stroke-width="1.1"/><rect x="1084.5" y="197.5" width="5" height="5" fill="#535353" stroke="#cfcfcf" stroke-width="1.1"/><rect x="1087.5" y="200.5" width="5" height="5" fill="#535353" stroke="#cfcfcf" stroke-width="1.1"/><path d="M1091.6 231 H1085 V245.8 H1100 V239" fill="none" stroke="#cfcfcf" stroke-width="2"/><path d="M1091 240 L1100 231" fill="none" stroke="#cfcfcf" stroke-width="1.8"/><path d="M1094.4 229 H1102 V236.6 H1100 V231 H1094.4 Z" fill="#cfcfcf"/><rect x="1086.5" y="273.5" width="12" height="12" fill="none" stroke="#cfcfcf" stroke-width="1.2"/><rect x="1084.8" y="271.8" width="3.4" height="3.4" fill="#cfcfcf"/><rect x="1096.8" y="271.8" width="3.4" height="3.4" fill="#cfcfcf"/><rect x="1084.8" y="283.8" width="3.4" height="3.4" fill="#cfcfcf"/><rect x="1096.8" y="283.8" width="3.4" height="3.4" fill="#cfcfcf"/><rect x="1090.8" y="271.8" width="3.4" height="3.4" fill="#cfcfcf"/><rect x="1090.8" y="283.8" width="3.4" height="3.4" fill="#cfcfcf"/><rect x="1084.8" y="277.8" width="3.4" height="3.4" fill="#cfcfcf"/><rect x="1096.8" y="277.8" width="3.4" height="3.4" fill="#cfcfcf"/><rect x="1091.6" y="278.6" width="1.6" height="1.6" fill="#cfcfcf"/><rect x="1085" y="298.4" width="1" height="18" fill="#cfcfcf"/><rect x="1087.4" y="300.6" width="7" height="5" fill="#cfcfcf"/><rect x="1087.4" y="308.4" width="12.4" height="5" fill="#cfcfcf"/><rect x="1085" y="328" width="9.4" height="9" fill="#cfcfcf"/><rect x="1090.4" y="333" width="9.6" height="9.6" fill="#cfcfcf"/><rect x="1090.9" y="333.5" width="3.2" height="3.2" fill="#535353" stroke="#cfcfcf" stroke-width="1"/><rect x="1089.4" y="332" width="6" height="6" fill="none" stroke="#535353" stroke-width="0.8"/></svg>
<div class="a" style="left:1113px;top:77px;width:253px;height:27px;background:#424242;"></div>
<div class="a" style="left:1113px;top:77px;width:49px;height:27px;background:#535353;"></div>
<span class="t" style="left:1128px;top:85.94px;font-size:10px;line-height:10px;color:#ededed;font-weight:700;transform:scaleX(0.9575);">Color</span>
<div class="a" style="left:1162px;top:77px;width:46px;height:26px;background:#484848;"></div>
<div class="a" style="left:1208px;top:77px;width:1px;height:26px;background:#3a3a3a;"></div>
<span class="t" style="left:1171px;top:85.94px;font-size:10px;line-height:10px;color:#a2a2a2;font-weight:700;transform:scaleX(0.8682);">Layers</span>
<div class="a" style="left:1113px;top:103px;width:253px;height:1px;background:#3a3a3a;"></div>
<div class="a" style="left:1113px;top:103px;width:49px;height:1px;background:#535353;"></div>
<svg class="a" style="left:1349px;top:87px;" width="10" height="8" viewBox="0 0 10 8"><rect x="0" y="0" width="10" height="1" fill="#d0d0d0"/><rect x="0" y="2" width="10" height="1" fill="#d0d0d0"/><rect x="0" y="4" width="10" height="1" fill="#d0d0d0"/><rect x="0" y="6" width="10" height="1" fill="#d0d0d0"/></svg>
<svg class="a" style="left:1117px;top:85px;" width="7" height="11" viewBox="0 0 7 11"><path d="M1 4 L3.5 1.4 L6 4 M1 7 L3.5 9.6 L6 7" fill="none" stroke="#c8c8c8" stroke-width="1.3"/></svg>
<svg class="a" style="left:1118px;top:110px;" width="13" height="13" viewBox="0 0 13 13"><rect x="4.5" y="4.5" width="7" height="7" fill="#1a1a1a" stroke="#d8d8d8" stroke-width="1"/><rect x="0.5" y="0.5" width="7" height="7" fill="#fff" stroke="#1a1a1a" stroke-width="1"/></svg>
<svg class="a" style="left:1138px;top:111px;" width="13" height="13" viewBox="0 0 13 13"><path d="M3.6 3.6 H6.6 C8.6 3.6 9 4.8 9 6.2 V9.4" fill="none" stroke="#cfcfcf" stroke-width="1.4"/><path d="M0.8 3.6 L4.2 0.6 V6.6 Z M9 12.4 L6 8.8 H12 Z" fill="#cfcfcf"/></svg>
<svg class="a" style="left:1118px;top:128px;" width="30" height="30" viewBox="0 0 30 30"><rect x="10.5" y="10.5" width="19" height="19" fill="#fff" stroke="#521212" stroke-width="0.9"/><rect x="16.5" y="16.5" width="7" height="7" fill="#535353" stroke="#333" stroke-width="1"/><line x1="11" y1="29" x2="29" y2="11" stroke="#d4151b" stroke-width="1.8"/><rect x="0.5" y="0.5" width="19" height="19" fill="#fff" stroke="#521212" stroke-width="0.9"/><line x1="1" y1="19" x2="19" y2="1" stroke="#d4151b" stroke-width="1.8"/></svg>
<span class="t" style="left:1166px;top:119.13px;font-size:10px;line-height:10px;color:#c4c4c4;font-weight:700;transform:scaleX(0.9676);">R</span>
<div class="a" style="left:1183px;top:120px;width:104px;height:6px;background:#515151;border:1px solid #5c5c5c;border-radius:1px;"></div>
<div class="a" style="left:1293px;top:112px;width:36px;height:21px;background:#454545;border:1px solid #5c5c5c;border-radius:3px;"></div>
<span class="t" style="left:1166px;top:152.13px;font-size:10px;line-height:10px;color:#c4c4c4;font-weight:700;transform:scaleX(0.9767);">G</span>
<div class="a" style="left:1183px;top:153px;width:104px;height:6px;background:#515151;border:1px solid #5c5c5c;border-radius:1px;"></div>
<div class="a" style="left:1293px;top:145px;width:36px;height:21px;background:#454545;border:1px solid #5c5c5c;border-radius:3px;"></div>
<span class="t" style="left:1166px;top:185.13px;font-size:10px;line-height:10px;color:#c4c4c4;font-weight:700;transform:scaleX(0.9676);">B</span>
<div class="a" style="left:1183px;top:186px;width:104px;height:6px;background:#515151;border:1px solid #5c5c5c;border-radius:1px;"></div>
<div class="a" style="left:1293px;top:178px;width:36px;height:21px;background:#454545;border:1px solid #5c5c5c;border-radius:3px;"></div>
<svg class="a" style="left:1124.5px;top:197px;" width="10" height="11" viewBox="0 0 10 11"><path d="M0.6 4.6 L5 0.4 L9.4 4.6 H6.4 V8 H9.6 V10.4 H3.6 V4.6 Z" fill="#cfcfcf"/></svg>
<div class="a" style="left:1143px;top:196px;width:14px;height:14px;background:#14113a;border:1px solid #fff;outline:1px solid #222;outline-offset:-2px;"></div>
<svg class="a" style="left:1118px;top:218px;" width="13" height="13" viewBox="0 0 13 13"><rect x="0" y="0" width="13" height="13" fill="#fff"/><line x1="0.5" y1="12.5" x2="12.5" y2="0.5" stroke="#d4151b" stroke-width="1.8"/></svg>
<div class="a" style="left:1131px;top:218px;width:13px;height:13px;background:#000;"></div>
<div class="a" style="left:1144px;top:218px;width:13px;height:13px;background:#fff;"></div>
<div class="a" style="left:1117.5px;top:217.5px;width:40px;height:14px;border:1px solid #3a2a2a;"></div>
<span class="t" style="left:1279px;top:221.53px;font-size:10px;line-height:10px;color:#c4c4c4;font-weight:700;transform:scaleX(1.2584);">#</span>
<div class="a" style="left:1289px;top:215px;width:60px;height:21px;background:#454545;border:1px solid #5c5c5c;border-radius:3px;"></div>
<svg class="a" style="left:1119px;top:242px;" width="229" height="23" viewBox="0 0 229 23"><defs><linearGradient id="hue" x1="0" x2="1" y1="0" y2="0"><stop offset="0" stop-color="#f00"/><stop offset="0.1667" stop-color="#ff0"/><stop offset="0.3333" stop-color="#0f0"/><stop offset="0.5" stop-color="#0ff"/><stop offset="0.6667" stop-color="#00f"/><stop offset="0.8333" stop-color="#f0f"/><stop offset="1" stop-color="#f00"/></linearGradient><linearGradient id="wb" x1="0" x2="0" y1="0" y2="1"><stop offset="0" stop-color="#fff" stop-opacity="1"/><stop offset="0.5" stop-color="#fff" stop-opacity="0"/><stop offset="0.5" stop-color="#000" stop-opacity="0"/><stop offset="1" stop-color="#000" stop-opacity="1"/></linearGradient></defs><rect x="0" y="0" width="229" height="23" fill="url(#hue)"/><rect x="0" y="0" width="229" height="23" fill="url(#wb)"/><rect x="0.5" y="0.5" width="228" height="22" fill="none" stroke="#2e2e2e"/></svg>
<div class="a" style="left:1113px;top:271px;width:253px;height:3px;background:#3a3a3a;"></div>
<div class="a" style="left:1113px;top:272px;width:253px;height:1px;background:#474747;"></div>
<div class="a" style="left:1113px;top:274px;width:253px;height:27px;background:#424242;"></div>
<div class="a" style="left:1113px;top:274px;width:79px;height:27px;background:#535353;"></div>
<span class="t" style="left:1128px;top:282.94px;font-size:10px;line-height:10px;color:#ededed;font-weight:700;transform:scaleX(0.9697);">Color Guide</span>
<div class="a" style="left:1113px;top:300px;width:253px;height:1px;background:#3a3a3a;"></div>
<div class="a" style="left:1113px;top:300px;width:79px;height:1px;background:#535353;"></div>
<svg class="a" style="left:1349px;top:284px;" width="10" height="8" viewBox="0 0 10 8"><rect x="0" y="0" width="10" height="1" fill="#d0d0d0"/><rect x="0" y="2" width="10" height="1" fill="#d0d0d0"/><rect x="0" y="4" width="10" height="1" fill="#d0d0d0"/><rect x="0" y="6" width="10" height="1" fill="#d0d0d0"/></svg>
<svg class="a" style="left:1117px;top:282px;" width="7" height="11" viewBox="0 0 7 11"><path d="M1 4 L3.5 1.4 L6 4 M1 7 L3.5 9.6 L6 7" fill="none" stroke="#c8c8c8" stroke-width="1.3"/></svg>
<div class="a" style="left:1118px;top:309px;width:21px;height:21px;background:#14113a;border:1px solid #000;"></div>
<div class="a" style="left:1119px;top:310px;width:19px;height:19px;border:2px solid #fff;"></div>
<div class="a" style="left:1144px;top:307px;width:216px;height:26px;background:#4f4f4f;border:1px solid #616161;border-radius:3px;"></div>
<div class="a" style="left:1341px;top:308px;width:1px;height:24px;background:#616161;"></div>
<svg class="a" style="left:1345.5px;top:316.5px;" width="9" height="6" viewBox="0 0 9 6"><path d="M1 1 L4.5 5 L8 1" fill="none" stroke="#e6e6e6" stroke-width="1.5"/></svg>
<div class="a" style="left:1148px;top:312px;width:16px;height:16px;background:#14113a;"></div>
<div class="a" style="left:1164px;top:312px;width:16px;height:16px;background:#26198c;"></div>
<div class="a" style="left:1180px;top:312px;width:16px;height:16px;background:#8c1d1c;"></div>
<div class="a" style="left:1196px;top:312px;width:16px;height:16px;background:#4a3720;"></div>
<div class="a" style="left:1212px;top:312px;width:16px;height:16px;background:#4a8c49;"></div>
<div class="a" style="left:1148px;top:312px;width:16px;height:16px;border:1px solid #fff;"></div>
<span class="t" style="left:1145px;top:341.54px;font-size:10px;line-height:10px;color:#c8c8c8;font-weight:700;transform:scaleX(1.0119);">Shades</span>
<span class="t" style="left:1307px;top:341.54px;font-size:10px;line-height:10px;color:#c8c8c8;font-weight:700;transform:scaleX(1.0540);">Tints</span>
<svg class="a" style="left:1235px;top:343px;" width="7" height="4" viewBox="0 0 7 4"><path d="M0.4 0.4 H6 L3.2 3.6 Z" fill="#c8c8c8"/></svg>
<svg class="a" style="left:1119px;top:357px;border-radius:3px;" width="240" height="74" viewBox="0 0 240 74"><rect x="0" y="0" width="240" height="74" rx="2" fill="#686868"/><rect x="0" y="0" width="26" height="14" fill="#000000"/><rect x="27" y="0" width="26" height="14" fill="#05040e"/><rect x="54" y="0" width="25" height="14" fill="#0a081d"/><rect x="80" y="0" width="26" height="14" fill="#0f0d2c"/><rect x="107" y="0" width="26" height="14" fill="#14113a"/><rect x="134" y="0" width="26" height="14" fill="#434161"/><rect x="161" y="0" width="25" height="14" fill="#727089"/><rect x="187" y="0" width="26" height="14" fill="#a1a0b0"/><rect x="214" y="0" width="26" height="14" fill="#d0cfd8"/><rect x="0" y="15" width="26" height="14" fill="#000000"/><rect x="27" y="15" width="26" height="14" fill="#0a0623"/><rect x="54" y="15" width="25" height="14" fill="#130c46"/><rect x="80" y="15" width="26" height="14" fill="#1c1369"/><rect x="107" y="15" width="26" height="14" fill="#26198c"/><rect x="134" y="15" width="26" height="14" fill="#5147a3"/><rect x="161" y="15" width="25" height="14" fill="#7d75ba"/><rect x="187" y="15" width="26" height="14" fill="#a8a3d1"/><rect x="214" y="15" width="26" height="14" fill="#d4d1e8"/><rect x="0" y="30" width="26" height="14" fill="#000000"/><rect x="27" y="30" width="26" height="14" fill="#230707"/><rect x="54" y="30" width="25" height="14" fill="#460e0e"/><rect x="80" y="30" width="26" height="14" fill="#691615"/><rect x="107" y="30" width="26" height="14" fill="#8c1d1c"/><rect x="134" y="30" width="26" height="14" fill="#a34a49"/><rect x="161" y="30" width="25" height="14" fill="#ba7777"/><rect x="187" y="30" width="26" height="14" fill="#d1a5a4"/><rect x="214" y="30" width="26" height="14" fill="#e8d2d2"/><rect x="0" y="45" width="26" height="14" fill="#000000"/><rect x="27" y="45" width="26" height="14" fill="#120e08"/><rect x="54" y="45" width="25" height="14" fill="#251c10"/><rect x="80" y="45" width="26" height="14" fill="#382918"/><rect x="107" y="45" width="26" height="14" fill="#4a3720"/><rect x="134" y="45" width="26" height="14" fill="#6e5f4d"/><rect x="161" y="45" width="25" height="14" fill="#928779"/><rect x="187" y="45" width="26" height="14" fill="#b7afa6"/><rect x="214" y="45" width="26" height="14" fill="#dbd7d2"/><rect x="0" y="60" width="26" height="14" fill="#000000"/><rect x="27" y="60" width="26" height="14" fill="#122312"/><rect x="54" y="60" width="25" height="14" fill="#254624"/><rect x="80" y="60" width="26" height="14" fill="#386937"/><rect x="107" y="60" width="26" height="14" fill="#4a8c49"/><rect x="134" y="60" width="26" height="14" fill="#6ea36d"/><rect x="161" y="60" width="25" height="14" fill="#92ba92"/><rect x="187" y="60" width="26" height="14" fill="#b7d1b6"/><rect x="214" y="60" width="26" height="14" fill="#dbe8db"/></svg>
<svg class="a" style="left:1124px;top:438px;" width="19" height="11" viewBox="0 0 19 11"><rect x="0.5" y="0.5" width="13" height="8" fill="none" stroke="#cfcfcf" stroke-width="1"/><path d="M0.5 4.5 H13.5 M5 0.5 V8.5 M9.4 0.5 V8.5" stroke="#cfcfcf" stroke-width="1"/><path d="M14.6 8.4 H17.8 L16.2 10.4 Z" fill="#cfcfcf"/></svg>
<span class="t" style="left:1150px;top:439.54px;font-size:10px;line-height:10px;color:#c8c8c8;font-weight:700;transform:scaleX(0.9400);">None</span>
<svg class="a" style="left:1300px;top:436px;" width="13" height="13" viewBox="0 0 13 13"><circle cx="6.5" cy="6.5" r="6.2" fill="#cfcfcf"/><circle cx="6.5" cy="6.5" r="4.2" fill="none" stroke="#535353" stroke-width="0.8"/><circle cx="6.5" cy="6.5" r="1.6" fill="#535353"/><line x1="7.89" y1="7.30" x2="11.70" y2="9.50" stroke="#535353" stroke-width="0.7"/><line x1="6.50" y1="8.10" x2="6.50" y2="12.50" stroke="#535353" stroke-width="0.7"/><line x1="5.11" y1="7.30" x2="1.30" y2="9.50" stroke="#535353" stroke-width="0.7"/><line x1="5.11" y1="5.70" x2="1.30" y2="3.50" stroke="#535353" stroke-width="0.7"/><line x1="6.50" y1="4.90" x2="6.50" y2="0.50" stroke="#535353" stroke-width="0.7"/><line x1="7.89" y1="5.70" x2="11.70" y2="3.50" stroke="#535353" stroke-width="0.7"/></svg>
<svg class="a" style="left:1323px;top:437px;" width="18" height="12" viewBox="0 0 18 12"><path d="M1 7.6 H6 M3.5 5 V10.2" stroke="#cfcfcf" stroke-width="1.6"/><rect x="6.5" y="1.5" width="10" height="8" fill="none" stroke="#cfcfcf" stroke-width="1"/><path d="M9.8 1.5 V9.5 M13.2 1.5 V9.5" stroke="#cfcfcf" stroke-width="1"/></svg>
<div class="a" style="left:1113px;top:452px;width:253px;height:3px;background:#3a3a3a;"></div>
<div class="a" style="left:1113px;top:453px;width:253px;height:1px;background:#474747;"></div>
<div class="a" style="left:1113px;top:455px;width:253px;height:27px;background:#424242;"></div>
<div class="a" style="left:1113px;top:455px;width:61px;height:27px;background:#535353;"></div>
<span class="t" style="left:1122px;top:463.94px;font-size:10px;line-height:10px;color:#ededed;font-weight:700;transform:scaleX(0.9428);">Swatches</span>
<div class="a" style="left:1174px;top:455px;width:57px;height:26px;background:#484848;"></div>
<div class="a" style="left:1231px;top:455px;width:1px;height:26px;background:#3a3a3a;"></div>
<span class="t" style="left:1183px;top:463.94px;font-size:10px;line-height:10px;color:#a2a2a2;font-weight:700;transform:scaleX(0.9231);">Libraries</span>
<div class="a" style="left:1113px;top:481px;width:253px;height:1px;background:#3a3a3a;"></div>
<div class="a" style="left:1113px;top:481px;width:61px;height:1px;background:#535353;"></div>
<svg class="a" style="left:1349px;top:465px;" width="10" height="8" viewBox="0 0 10 8"><rect x="0" y="0" width="10" height="1" fill="#d0d0d0"/><rect x="0" y="2" width="10" height="1" fill="#d0d0d0"/><rect x="0" y="4" width="10" height="1" fill="#d0d0d0"/><rect x="0" y="6" width="10" height="1" fill="#d0d0d0"/></svg>
<svg class="a" style="left:1118px;top:488px;" width="30" height="30" viewBox="0 0 30 30"><rect x="10.5" y="10.5" width="19" height="19" fill="#fff" stroke="#521212" stroke-width="0.9"/><rect x="16.5" y="16.5" width="7" height="7" fill="#535353" stroke="#333" stroke-width="1"/><line x1="11" y1="29" x2="29" y2="11" stroke="#d4151b" stroke-width="1.8"/><rect x="0.5" y="0.5" width="19" height="19" fill="#fff" stroke="#521212" stroke-width="0.9"/><line x1="1" y1="19" x2="19" y2="1" stroke="#d4151b" stroke-width="1.8"/></svg>
<div class="a" style="left:1311px;top:488px;width:49px;height:24px;border:1px solid #5c5c5c;border-radius:3px;"></div>
<div class="a" style="left:1335px;top:489px;width:24px;height:22px;background:#2f2f2f;border-radius:0 2px 2px 0;"></div>
<svg class="a" style="left:1317px;top:493px;" width="13" height="15" viewBox="0 0 13 15"><rect x="0" y="0.6" width="12.4" height="2" fill="#cfcfcf"/><rect x="0" y="4.3999999999999995" width="12.4" height="2" fill="#cfcfcf"/><rect x="0" y="8.2" width="12.4" height="2" fill="#cfcfcf"/><rect x="0" y="11.999999999999998" width="12.4" height="2" fill="#cfcfcf"/></svg>
<svg class="a" style="left:1341px;top:493px;" width="15" height="15" viewBox="0 0 15 15"><rect x="0.0" y="0.0" width="3.8" height="3.8" fill="#cfcfcf"/><rect x="5.2" y="0.0" width="3.8" height="3.8" fill="#cfcfcf"/><rect x="10.4" y="0.0" width="3.8" height="3.8" fill="#cfcfcf"/><rect x="0.0" y="5.2" width="3.8" height="3.8" fill="#cfcfcf"/><rect x="5.2" y="5.2" width="3.8" height="3.8" fill="#cfcfcf"/><rect x="10.4" y="5.2" width="3.8" height="3.8" fill="#cfcfcf"/><rect x="0.0" y="10.4" width="3.8" height="3.8" fill="#cfcfcf"/><rect x="5.2" y="10.4" width="3.8" height="3.8" fill="#cfcfcf"/><rect x="10.4" y="10.4" width="3.8" height="3.8" fill="#cfcfcf"/></svg>
<div class="a" style="left:1118px;top:523px;width:242px;height:154px;border:1px solid #5b5b5b;border-top-color:#4a4a4a;"></div>
<svg class="a" style="left:1119px;top:524px;" width="224" height="74" viewBox="0 0 224 74"><defs><linearGradient id="g1" x1="0" x2="1"><stop offset="0" stop-color="#fff"/><stop offset="1" stop-color="#1a1a1a"/></linearGradient><linearGradient id="g2" x1="0" x2="1"><stop offset="0" stop-color="#fff200"/><stop offset="1" stop-color="#f15a24"/></linearGradient><pattern id="chk" width="4" height="4" patternUnits="userSpaceOnUse"><rect width="4" height="4" fill="#fff"/><rect width="2" height="2" fill="#d0d0d0"/><rect x="2" y="2" width="2" height="2" fill="#d0d0d0"/></pattern><linearGradient id="pb" x1="0" x2="1"><stop offset="0" stop-color="#1e8fd8"/><stop offset="1" stop-color="#1e8fd8" stop-opacity="0.15"/></linearGradient><radialGradient id="pr"><stop offset="0.5" stop-color="#000" stop-opacity="0"/><stop offset="0.75" stop-color="#000" stop-opacity="1"/></radialGradient></defs><rect x="0" y="0" width="13" height="13" fill="#fff"/><rect x="1.5" y="1.5" width="10" height="10" fill="#fff" stroke="#000" stroke-width="1.2"/><line x1="2.5" y1="10.5" x2="10.5" y2="2.5" stroke="#e0151b" stroke-width="2"/><rect x="14" y="0" width="13" height="13" fill="#f4f4f4"/><circle cx="20.5" cy="6.5" r="4.6" fill="none" stroke="#777" stroke-width="0.9"/><circle cx="20.5" cy="6.5" r="1.8" fill="none" stroke="#777" stroke-width="0.8"/><path d="M20.5 0 V13 M14 6.5 H27" stroke="#777" stroke-width="0.7"/><rect x="28" y="0" width="13" height="13" fill="#ffffff"/><rect x="42" y="0" width="13" height="13" fill="#231f20"/><rect x="56" y="0" width="13" height="13" fill="#ed1c24"/><rect x="70" y="0" width="13" height="13" fill="#fff200"/><rect x="84" y="0" width="13" height="13" fill="#00a651"/><rect x="98" y="0" width="13" height="13" fill="#00aeef"/><rect x="112" y="0" width="13" height="13" fill="#2e3192"/><rect x="126" y="0" width="13" height="13" fill="#ec008c"/><rect x="140" y="0" width="13" height="13" fill="#c1272d"/><rect x="154" y="0" width="13" height="13" fill="#f0453a"/><rect x="168" y="0" width="13" height="13" fill="#f15a24"/><rect x="182" y="0" width="13" height="13" fill="#f7931e"/><rect x="196" y="0" width="13" height="13" fill="#fbb03b"/><rect x="210" y="0" width="13" height="13" fill="#fcee21"/><rect x="0" y="14" width="13" height="13" fill="#d9e021"/><rect x="14" y="14" width="13" height="13" fill="#8cc63f"/><rect x="28" y="14" width="13" height="13" fill="#39b54a"/><rect x="42" y="14" width="13" height="13" fill="#009245"/><rect x="56" y="14" width="13" height="13" fill="#006837"/><rect x="70" y="14" width="13" height="13" fill="#22b573"/><rect x="84" y="14" width="13" height="13" fill="#00a99d"/><rect x="98" y="14" width="13" height="13" fill="#29abe2"/><rect x="112" y="14" width="13" height="13" fill="#0071bc"/><rect x="126" y="14" width="13" height="13" fill="#2e3192"/><rect x="140" y="14" width="13" height="13" fill="#1b1464"/><rect x="154" y="14" width="13" height="13" fill="#662d91"/><rect x="168" y="14" width="13" height="13" fill="#93278f"/><rect x="182" y="14" width="13" height="13" fill="#9e005d"/><rect x="196" y="14" width="13" height="13" fill="#d4145a"/><rect x="210" y="14" width="13" height="13" fill="#ed1e79"/><rect x="0" y="28" width="13" height="13" fill="#c7b299"/><rect x="14" y="28" width="13" height="13" fill="#998675"/><rect x="28" y="28" width="13" height="13" fill="#736357"/><rect x="42" y="28" width="13" height="13" fill="#534741"/><rect x="56" y="28" width="13" height="13" fill="#c69c6d"/><rect x="70" y="28" width="13" height="13" fill="#a67c52"/><rect x="84" y="28" width="13" height="13" fill="#8c6239"/><rect x="98" y="28" width="13" height="13" fill="#754c24"/><rect x="112" y="28" width="13" height="13" fill="#603813"/><rect x="126" y="28" width="13" height="13" fill="#42210b"/><rect x="140" y="28" width="13" height="13" fill="url(#g1)"/><rect x="154" y="28" width="13" height="13" fill="url(#g2)"/><g transform="translate(168 28)"><rect width="13" height="13" fill="url(#chk)"/><rect width="13" height="13" fill="url(#pb)"/></g><g transform="translate(182 28)"><rect width="13" height="13" fill="url(#chk)"/><rect width="13" height="13" fill="#000"/><circle cx="6.5" cy="6.5" r="4.4" fill="url(#chk)"/><circle cx="6.5" cy="6.5" r="4.4" fill="none" stroke="#888" stroke-width="1"/></g><g transform="translate(196 28)"><rect width="13" height="13" fill="#6bbf3a"/><path d="M0 0 L6.5 5 L13 0 Z M0 13 L6.5 8 L13 13 Z" fill="#e9f5d8"/><circle cx="6.5" cy="6.5" r="2.4" fill="#4aa52a"/><path d="M0 3 L3 6.5 L0 10 Z M13 3 L10 6.5 L13 10 Z" fill="#3f9a2a"/></g><g transform="translate(210 28)"><rect width="13" height="13" fill="#b08a6a"/><path d="M1 2 q2 -2 4 0 t4 0 t4 0 M0 6 q2 -2 4 0 t4 0 t4 0 M1 10 q2 -2 4 0 t4 0 t4 0" stroke="#ead9c6" stroke-width="1.3" fill="none"/><path d="M0 4 q2 2 4 0 t4 0 t4 0 M1 8 q2 2 4 0 t4 0 t4 0 M0 12 q2 2 4 0 t4 0 t4 0" stroke="#8a5f3a" stroke-width="1" fill="none"/></g><rect x="1" y="45.2" width="4" height="1.2" fill="#c8c8c8"/><rect x="1" y="48" width="11" height="7" fill="#c8c8c8"/><rect x="14" y="44" width="13" height="13" fill="#231f20"/><rect x="28" y="44" width="13" height="13" fill="#414042"/><rect x="42" y="44" width="13" height="13" fill="#58595b"/><rect x="56" y="44" width="13" height="13" fill="#6d6e71"/><rect x="70" y="44" width="13" height="13" fill="#808285"/><rect x="84" y="44" width="13" height="13" fill="#939598"/><rect x="98" y="44" width="13" height="13" fill="#a7a9ac"/><rect x="112" y="44" width="13" height="13" fill="#bcbec0"/><rect x="126" y="44" width="13" height="13" fill="#d1d3d4"/><rect x="140" y="44" width="13" height="13" fill="#e6e7e8"/><rect x="154" y="44" width="13" height="13" fill="#f1f2f2"/><rect x="1" y="61.2" width="4" height="1.2" fill="#c8c8c8"/><rect x="1" y="64" width="11" height="7" fill="#c8c8c8"/><rect x="14" y="60" width="13" height="13" fill="#ed1c24"/><rect x="28" y="60" width="13" height="13" fill="#f26522"/><rect x="42" y="60" width="13" height="13" fill="#ffde17"/><rect x="56" y="60" width="13" height="13" fill="#00a651"/><rect x="70" y="60" width="13" height="13" fill="#21409a"/><rect x="84" y="60" width="13" height="13" fill="#7f3f98"/></svg>
<svg class="a" style="left:1346px;top:527px;" width="10" height="6" viewBox="0 0 10 6"><path d="M1 5 L5 1.4 L9 5" fill="none" stroke="#5a5a5a" stroke-width="1.2"/></svg>
<svg class="a" style="left:1346px;top:665px;" width="10" height="6" viewBox="0 0 10 6"><path d="M1 1 L5 4.6 L9 1" fill="none" stroke="#5a5a5a" stroke-width="1.2"/></svg>
<svg class="a" style="left:1113px;top:678px" width="253" height="18" viewBox="1113 678 253 18"><rect x="1124" y="681.6" width="2" height="9.6" fill="#cfcfcf"/><rect x="1127.4" y="681.6" width="2.6" height="9.6" fill="#cfcfcf"/><path d="M1131 682 L1133 681.4 L1136 690.6 L1134 691.2 Z" fill="#cfcfcf"/><path d="M1136.4 690 H1139.6 L1138 692 Z" fill="#cfcfcf"/><circle cx="1155.4" cy="686.6" r="3.2" fill="none" stroke="#cfcfcf" stroke-width="1.2"/><circle cx="1155.4" cy="686.6" r="1" fill="#cfcfcf"/><circle cx="1160" cy="682.6" r="1.6" fill="#cfcfcf"/><circle cx="1160" cy="690.6" r="1.6" fill="#cfcfcf"/><path d="M1157 685 L1160 682.6 M1157 688.2 L1160 690.6" stroke="#cfcfcf" stroke-width="1"/><path d="M1181 691 H1189 C1193 691 1193 686 1189.6 685.8 C1189.4 681.6 1183.6 680.6 1182.4 684.4 C1179.6 684.4 1178.6 688 1181 691 Z" fill="#cfcfcf"/><path d="M1174 688.6 H1179.6 M1177.6 686 L1180 688.6 L1177.6 691.2" fill="none" stroke="#cfcfcf" stroke-width="1.3"/><rect x="1221.6" y="681.4" width="2.6" height="2.6" fill="#cfcfcf"/><rect x="1225.0" y="681.4" width="2.6" height="2.6" fill="#cfcfcf"/><rect x="1228.3999999999999" y="681.4" width="2.6" height="2.6" fill="#cfcfcf"/><rect x="1221.6" y="684.8" width="2.6" height="2.6" fill="#cfcfcf"/><rect x="1225.0" y="684.8" width="2.6" height="2.6" fill="#cfcfcf"/><rect x="1228.3999999999999" y="684.8" width="2.6" height="2.6" fill="#cfcfcf"/><rect x="1221.6" y="688.1999999999999" width="2.6" height="2.6" fill="#cfcfcf"/><rect x="1225.0" y="688.1999999999999" width="2.6" height="2.6" fill="#cfcfcf"/><rect x="1228.3999999999999" y="688.1999999999999" width="2.6" height="2.6" fill="#cfcfcf"/><rect x="1221" y="680.8" width="10.6" height="10.6" fill="none" stroke="#cfcfcf" stroke-width="0.8"/><path d="M1233 690 H1236.2 L1234.6 692 Z" fill="#cfcfcf"/><rect x="1248.5" y="681.5" width="10" height="10" fill="none" stroke="#6a6a6a" stroke-width="1"/><path d="M1250.6 685 H1256.6 M1250.6 687.4 H1256.6 M1250.6 689.6 H1256.6" stroke="#6a6a6a" stroke-width="0.9"/><path d="M1273 681.4 H1278 V682.8 H1286 V691.4 H1273 Z" fill="#cfcfcf"/><path d="M1302 681.4 H1311 V691.2 H1305 L1302 688.2 Z" fill="#6a6a6a"/><path d="M1326.4 683.6 H1336.6 M1329.6 683 V681.6 H1333.4 V683 M1327.6 684.6 L1328.2 691.6 H1334.8 L1335.4 684.6 M1330 685.6 V690 M1331.5 685.6 V690 M1333 685.6 V690" fill="none" stroke="#6a6a6a" stroke-width="0.9"/></svg>
<div class="a" style="left:1113px;top:696px;width:253px;height:3px;background:#3a3a3a;"></div>
<div class="a" style="left:1113px;top:697px;width:253px;height:1px;background:#474747;"></div>
<div class="a" style="left:1113px;top:699px;width:253px;height:27px;background:#424242;"></div>
<div class="a" style="left:1113px;top:699px;width:53px;height:26px;background:#484848;"></div>
<div class="a" style="left:1166px;top:699px;width:1px;height:26px;background:#3a3a3a;"></div>
<span class="t" style="left:1122px;top:707.93px;font-size:10px;line-height:10px;color:#a2a2a2;font-weight:700;transform:scaleX(0.8872);">Brushes</span>
<div class="a" style="left:1167px;top:699px;width:49px;height:26px;background:#484848;"></div>
<div class="a" style="left:1216px;top:699px;width:1px;height:26px;background:#3a3a3a;"></div>
<span class="t" style="left:1176px;top:707.93px;font-size:10px;line-height:10px;color:#a2a2a2;font-weight:700;transform:scaleX(1.0120);">Stroke</span>
<div class="a" style="left:1217px;top:699px;width:57px;height:27px;background:#535353;"></div>
<span class="t" style="left:1226px;top:707.93px;font-size:10px;line-height:10px;color:#ededed;font-weight:700;transform:scaleX(0.9475);">Symbols</span>
<div class="a" style="left:1113px;top:725px;width:253px;height:1px;background:#3a3a3a;"></div>
<div class="a" style="left:1217px;top:725px;width:57px;height:1px;background:#535353;"></div>
<svg class="a" style="left:1349px;top:709px;" width="10" height="8" viewBox="0 0 10 8"><rect x="0" y="0" width="10" height="1" fill="#d0d0d0"/><rect x="0" y="2" width="10" height="1" fill="#d0d0d0"/><rect x="0" y="4" width="10" height="1" fill="#d0d0d0"/><rect x="0" y="6" width="10" height="1" fill="#d0d0d0"/></svg>
<div class="a" style="left:1113px;top:726px;width:253px;height:3px;background:#3a3a3a;"></div>
<div class="a" style="left:74px;top:711px;width:996px;height:16px;background:#535353;"></div>
<div class="a" style="left:78px;top:711px;width:50px;height:16px;background:#454545;"></div>
<span class="t" style="left:81.5px;top:716.74px;font-size:10px;line-height:10px;color:#f2f2f2;transform:scaleX(0.9578);-webkit-text-stroke:0.3px #f2f2f2;">101%</span>
<div class="a" style="left:128px;top:711px;width:18px;height:16px;background:#4a4a4a;"></div>
<svg class="a" style="left:132.5px;top:717.5px;" width="9" height="6" viewBox="0 0 9 6"><path d="M1 1 L4.5 5 L8 1" fill="none" stroke="#e6e6e6" stroke-width="1.5"/></svg>
<div class="a" style="left:146px;top:711px;width:1px;height:16px;background:#3f3f3f;"></div>
<svg class="a" style="left:153px;top:716px;" width="28" height="9" viewBox="0 0 28 9"><g fill="#747474"><rect x="1" y="0.5" width="1.6" height="8"/><path d="M9.4 0.5 V8.5 L3.6 4.5 Z"/><path d="M26 0.5 V8.5 L19.6 4.5 Z"/></g></svg>
<div class="a" style="left:188px;top:711px;width:40px;height:16px;background:#454545;"></div>
<span class="t" style="left:191.5px;top:716.74px;font-size:10px;line-height:10px;color:#f2f2f2;-webkit-text-stroke:0.3px #f2f2f2;">1</span>
<div class="a" style="left:228px;top:711px;width:18px;height:16px;background:#4a4a4a;"></div>
<svg class="a" style="left:232.5px;top:717.5px;" width="9" height="6" viewBox="0 0 9 6"><path d="M1 1 L4.5 5 L8 1" fill="none" stroke="#e6e6e6" stroke-width="1.5"/></svg>
<div class="a" style="left:246px;top:711px;width:1px;height:16px;background:#3f3f3f;"></div>
<svg class="a" style="left:254px;top:716px;" width="28" height="9" viewBox="0 0 28 9"><g fill="#747474"><path d="M1 0.5 V8.5 L7.4 4.5 Z"/><path d="M17.6 0.5 V8.5 L23.4 4.5 Z"/><rect x="24.4" y="0.5" width="1.6" height="8"/></g></svg>
<div class="a" style="left:287px;top:711px;width:1px;height:16px;background:#444;"></div>
<span class="t" style="left:368.5px;top:716.53px;font-size:10px;line-height:10px;color:#d6d6d6;transform:scaleX(0.9601);">Selection</span>
<div class="a" style="left:488px;top:711px;width:18px;height:16px;background:#4c4c4c;"></div>
<svg class="a" style="left:494px;top:716px;" width="7" height="9" viewBox="0 0 7 9"><path d="M1 0.6 V8.4 L6.4 4.5 Z" fill="#dcdcdc"/></svg>
<div class="a" style="left:506px;top:711px;width:548px;height:16px;background:#4a4a4a;"></div>
<svg class="a" style="left:511px;top:715px;" width="6" height="9" viewBox="0 0 6 9"><path d="M4.6 1 L1.4 4.5 L4.6 8" fill="none" stroke="#a8a8a8" stroke-width="1.2"/></svg>
<svg class="a" style="left:1042px;top:715px;" width="6" height="9" viewBox="0 0 6 9"><path d="M1.4 1 L4.6 4.5 L1.4 8" fill="none" stroke="#a8a8a8" stroke-width="1.2"/></svg>
<div class="a" style="left:767px;top:713px;width:25px;height:13px;background:#626262;border-radius:6.5px;"></div>
<div class="a" style="left:1054px;top:711px;width:16px;height:16px;background:#4d4d4d;"></div>
<div class="a" style="left:0px;top:727px;width:1366px;height:1px;background:#3a3a3a;"></div>
<div class="a" style="left:0px;top:728px;width:1366px;height:1px;background:#585858;"></div>
</body></html>
